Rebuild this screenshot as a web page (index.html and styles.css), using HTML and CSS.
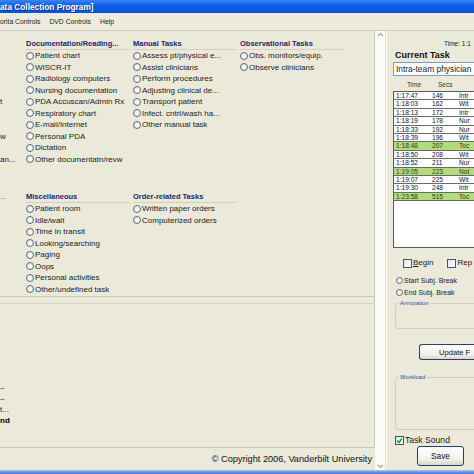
FILE: index.html
```html
<html lang="en">
<head>
    <title>Data Collection Program</title>
    <meta charset="UTF-8">
    <meta name="viewport" content="width=device-width, initial-scale=1.0">
    <link rel="stylesheet" href="styles.css">
</head>

<body>
<div class="window">
    <div class="titlebar">ata Collection Program]</div>
    <div class="menubar">
        <span class="menu-item">orita Controls</span>
        <span class="menu-item">DVD Controls</span>
        <span class="menu-item">Help</span>
    </div>

    <div class="main">
        <div class="leftcol">
            <div class="tasks">
                <!-- first block of task groups -->
                <div class="section">
                    <div class="group frag">
                        <div class="group-title"></div>
                        <div class="opt"></div>
                        <div class="opt"></div>
                        <div class="opt"></div>
                        <div class="opt"></div>
                        <div class="opt"><span class="lbl">t</span></div>
                        <div class="opt"></div>
                        <div class="opt"></div>
                        <div class="opt"><span class="lbl">w</span></div>
                        <div class="opt"></div>
                        <div class="opt"><span class="lbl">an...</span></div>
                    </div>
                    <div class="group">
                        <div class="group-title">Documentation/Reading...</div>
                        <div class="opt"><span class="radio"></span><span class="lbl">Patient chart</span></div>
                        <div class="opt"><span class="radio"></span><span class="lbl">WISCR-IT</span></div>
                        <div class="opt"><span class="radio"></span><span class="lbl">Radiology computers</span></div>
                        <div class="opt"><span class="radio"></span><span class="lbl">Nursing documentation</span></div>
                        <div class="opt"><span class="radio"></span><span class="lbl">PDA Accuscan/Admin Rx</span></div>
                        <div class="opt"><span class="radio"></span><span class="lbl">Respiratory chart</span></div>
                        <div class="opt"><span class="radio"></span><span class="lbl">E-mail/Internet</span></div>
                        <div class="opt"><span class="radio"></span><span class="lbl">Personal PDA</span></div>
                        <div class="opt"><span class="radio"></span><span class="lbl">Dictation</span></div>
                        <div class="opt"><span class="radio"></span><span class="lbl">Other documentatn/revw</span></div>
                    </div>
                    <div class="group">
                        <div class="group-title">Manual Tasks</div>
                        <div class="opt"><span class="radio"></span><span class="lbl">Assess pt/physical e...</span></div>
                        <div class="opt"><span class="radio"></span><span class="lbl">Assist clinicians</span></div>
                        <div class="opt"><span class="radio"></span><span class="lbl">Perform procedures</span></div>
                        <div class="opt"><span class="radio"></span><span class="lbl">Adjusting clinical de...</span></div>
                        <div class="opt"><span class="radio"></span><span class="lbl">Transport patient</span></div>
                        <div class="opt"><span class="radio"></span><span class="lbl">Infect. cntrl/wash ha...</span></div>
                        <div class="opt"><span class="radio"></span><span class="lbl">Other manual task</span></div>
                    </div>
                    <div class="group">
                        <div class="group-title">Observational Tasks</div>
                        <div class="opt"><span class="radio"></span><span class="lbl">Obs. monitors/equip.</span></div>
                        <div class="opt"><span class="radio"></span><span class="lbl">Observe clinicians</span></div>
                    </div>
                </div>

                <!-- second block -->
                <div class="section section-2">
                    <div class="group frag">
                        <div class="group-title">...</div>
                    </div>
                    <div class="group">
                        <div class="group-title">Miscellaneous</div>
                        <div class="opt"><span class="radio"></span><span class="lbl">Patient room</span></div>
                        <div class="opt"><span class="radio"></span><span class="lbl">Idle/wait</span></div>
                        <div class="opt"><span class="radio"></span><span class="lbl">Time in transit</span></div>
                        <div class="opt"><span class="radio"></span><span class="lbl">Looking/searching</span></div>
                        <div class="opt"><span class="radio"></span><span class="lbl">Paging</span></div>
                        <div class="opt"><span class="radio"></span><span class="lbl">Oops</span></div>
                        <div class="opt"><span class="radio"></span><span class="lbl">Personal activities</span></div>
                        <div class="opt"><span class="radio"></span><span class="lbl">Other/undefined task</span></div>
                    </div>
                    <div class="group">
                        <div class="group-title">Order-related Tasks</div>
                        <div class="opt"><span class="radio"></span><span class="lbl">Written paper orders</span></div>
                        <div class="opt"><span class="radio"></span><span class="lbl">Computerized orders</span></div>
                    </div>
                    <div class="group"></div>
                </div>

                <!-- third block, only the edge of the first column shows -->
                <div class="section section-3">
                    <div class="group frag">
                        <div class="opt tail"><span class="lbl">–</span></div>
                        <div class="opt tail"><span class="lbl">–</span></div>
                        <div class="opt tail"><span class="lbl">t...</span></div>
                        <div class="opt tail"><span class="lbl strong">nd</span></div>
                    </div>
                </div>
            </div>
            <div class="footer">© Copyright 2006, Vanderbilt University</div>
        </div>

        <div class="vscroll">
            <svg class="arrow" width="11" height="8" viewBox="0 0 11 8"><path d="M3 5 L5.5 2.5 L8 5" fill="none" stroke="#a0a0a0" stroke-width="1.1"/></svg>
            <svg class="arrow" width="11" height="8" viewBox="0 0 11 8"><path d="M3 3 L5.5 5.5 L8 3" fill="none" stroke="#a0a0a0" stroke-width="1.1"/></svg>
        </div>

        <div class="side">
            <div class="clock">Time: 1:1</div>
            <div class="current-title">Current Task</div>
            <div class="current-box">Intra-team physician</div>
            <div class="log-head"><span class="c-time">Time</span><span class="c-secs">Secs</span></div>
            <div class="log">
                <div class="log-row"><span class="c-time">1:17:47</span><span class="c-secs">146</span><span class="c-task">Intr</span></div>
                <div class="log-row"><span class="c-time">1:18:03</span><span class="c-secs">162</span><span class="c-task">Wit</span></div>
                <div class="log-row"><span class="c-time">1:18:13</span><span class="c-secs">172</span><span class="c-task">Intr</span></div>
                <div class="log-row"><span class="c-time">1:18:19</span><span class="c-secs">178</span><span class="c-task">Nur</span></div>
                <div class="log-row"><span class="c-time">1:18:33</span><span class="c-secs">192</span><span class="c-task">Nur</span></div>
                <div class="log-row"><span class="c-time">1:18:39</span><span class="c-secs">196</span><span class="c-task">Wit</span></div>
                <div class="log-row hl"><span class="c-time">1:18:48</span><span class="c-secs">207</span><span class="c-task">Toc</span></div>
                <div class="log-row"><span class="c-time">1:18:50</span><span class="c-secs">208</span><span class="c-task">Wit</span></div>
                <div class="log-row"><span class="c-time">1:18:52</span><span class="c-secs">211</span><span class="c-task">Nur</span></div>
                <div class="log-row hl"><span class="c-time">1:19:05</span><span class="c-secs">223</span><span class="c-task">Not</span></div>
                <div class="log-row"><span class="c-time">1:19:07</span><span class="c-secs">225</span><span class="c-task">Wit</span></div>
                <div class="log-row"><span class="c-time">1:19:30</span><span class="c-secs">248</span><span class="c-task">Intr</span></div>
                <div class="log-row hl"><span class="c-time">1:23:58</span><span class="c-secs">515</span><span class="c-task">Toc</span></div>
            </div>

            <div class="checks">
                <span class="check-item"><span class="checkbox"></span><span><u>B</u>egin</span></span>
                <span class="check-item"><span class="checkbox"></span><span>Rep</span></span>
            </div>
            <div class="subj">
                <div class="sopt"><span class="radio sm"></span><span>Start Subj. Break</span></div>
                <div class="sopt"><span class="radio sm"></span><span>End Subj. Break</span></div>
            </div>

            <fieldset class="gbox annotation"><legend>Annotation</legend></fieldset>
            <button class="xpbtn update"><span class="btn-text">Update F</span></button>
            <fieldset class="gbox workload"><legend>Workload</legend></fieldset>

            <div class="sound"><span class="checkbox checked">
                <svg width="7" height="7" viewBox="0 0 7 7"><path d="M1 3.5 L3 5.5 L6 1.5" fill="none" stroke="#21a121" stroke-width="1.5"/></svg>
            </span><span>Task Sound</span></div>
            <button class="xpbtn save">Save</button>
        </div>
    </div>
    <div class="frame-bottom"></div>
</div>
</body>
</html>
```

FILE: styles.css
```css
* {
    box-sizing: border-box;
}

body {
    margin: 0;
    width: 474px;
    height: 474px;
    overflow: hidden;
    background-color: #ebe9d9;
    font-family: "Liberation Sans", Arial, sans-serif;
    color: #1b1b1b;
}

.window {
    display: flex;
    flex-direction: column;
    height: 474px;
}

.titlebar {
    height: 13px;
    padding-top: 2px;
    background: linear-gradient(#3a86f4, #0c5ee6 45%, #0a54d6);
    color: #ffffff;
    font-size: 8.3px;
    font-weight: bold;
    line-height: 11px;
    white-space: nowrap;
    text-shadow: 1px 1px 0 #0b2f8f;
}

.menubar {
    display: flex;
    gap: 9px;
    height: 18px;
    font-size: 6.8px;
    line-height: 17px;
    border-bottom: 1px solid #cfccbb;
    background-color: #edebdd;
}

.main {
    display: flex;
    height: 439px;
}

/* ---------- left task area ---------- */
.leftcol {
    width: 375px;
    display: flex;
    flex-direction: column;
}

.tasks {
    flex: 1;
    overflow: hidden;
    padding-top: 7px;
    border-right: 1px solid #c9c6b5;
    border-bottom: 1px solid #c9c6b5;
}

.section {
    display: grid;
    grid-template-columns: 26px repeat(3, 107px);
}

.section-2 {
    margin-top: 26px;
    padding-bottom: 1px;
    border-bottom: 1px solid #cdcabb;
}

.section-3 {
    margin-top: 6px;
    padding-top: 78px;
    border-top: 1px solid #d9d6c8;
}

.group-title {
    width: 104px;
    height: 12px;
    font-size: 7.5px;
    font-weight: bold;
    line-height: 11px;
    color: #24246e;
    white-space: nowrap;
    border-bottom: 1px solid #d3d0c0;
}

.opt {
    display: flex;
    align-items: center;
    gap: 1px;
    height: 11.5px;
    font-size: 8px;
}

.opt.tail {
    height: 11px;
}

.lbl {
    white-space: nowrap;
    color: #222222;
}

/* the column cut off by the left window edge */
.frag .group-title {
    width: auto;
    border-bottom-color: transparent;
    color: #555555;
    font-weight: normal;
}

.frag .opt {
    color: #444444;
}

.radio {
    flex: none;
    width: 8px;
    height: 8px;
    border-radius: 50%;
    border: 1px solid #5d6a84;
    background: radial-gradient(circle at 60% 60%, #ffffff, #dedcd0);
}

.radio.sm {
    width: 7px;
    height: 7px;
}

.strong {
    font-weight: bold;
    color: #000000;
}

.footer {
    height: 22px;
    padding-right: 3px;
    text-align: right;
    font-size: 9.2px;
    line-height: 23px;
    color: #111111;
}

/* ---------- scrollbar strip ---------- */
.vscroll {
    width: 11px;
    display: flex;
    flex-direction: column;
    justify-content: space-between;
    background-color: #fafaf6;
    border-right: 1px solid #e2dfd1;
}

.arrow {
    display: block;
}

/* ---------- right side panel ---------- */
.side {
    width: 88px;
    overflow: hidden;
    padding-left: 6px;
    display: flex;
    flex-direction: column;
    align-items: flex-start;
    border-left: 1px solid #f6f5ef;
}

.clock {
    margin-top: 8px;
    height: 10px;
    padding-left: 51px;
    font-size: 6.5px;
    line-height: 10px;
    white-space: nowrap;
}

.current-title {
    height: 12px;
    padding-left: 2px;
    font-size: 9px;
    font-weight: bold;
    line-height: 12px;
    color: #111111;
    white-space: nowrap;
}

.current-box {
    margin-top: 1px;
    width: 100px;
    flex: none;
    height: 14px;
    padding-left: 2px;
    background-color: #ffffff;
    border: 1px solid #7f9db9;
    font-size: 8.4px;
    line-height: 12px;
    white-space: nowrap;
}

.log-head {
    margin-top: 4px;
    height: 10px;
    display: flex;
    padding-left: 3px;
    font-size: 6.5px;
    line-height: 10px;
    color: #333333;
    white-space: nowrap;
}

.log-head .c-time {
    text-align: center;
}

.log-head .c-secs {
    padding-left: 6px;
}

.c-time {
    width: 36px;
    flex: none;
}

.c-secs {
    width: 27px;
    flex: none;
}

.c-task {
    white-space: nowrap;
}

.log {
    margin-top: 1px;
    width: 100px;
    flex: none;
    height: 157px;
    background-color: #ffffff;
    border: 1px solid #5c5c5c;
    border-right: none;
}

.log-row {
    display: flex;
    height: 8.4px;
    padding-left: 2px;
    font-size: 6.6px;
    line-height: 8px;
    color: #101030;
    border-bottom: 1px solid #6a6a6a;
    white-space: nowrap;
}

.log-row.hl {
    background-color: #b2dc7c;
    color: #1f3d10;
}

.checks {
    margin-top: 9px;
    height: 12px;
    display: flex;
    gap: 14px;
    padding-left: 10px;
    font-size: 8px;
    line-height: 12px;
    white-space: nowrap;
}

.check-item {
    display: flex;
    align-items: center;
    gap: 1px;
}

.checkbox {
    flex: none;
    width: 9px;
    height: 9px;
    border: 1px solid #3a5580;
    background: linear-gradient(135deg, #e4e3dc, #ffffff);
    display: flex;
    align-items: center;
    justify-content: center;
}

.subj {
    margin-top: 6px;
    padding-left: 3px;
}

.sopt {
    display: flex;
    align-items: center;
    gap: 1px;
    height: 11.5px;
    font-size: 7px;
    white-space: nowrap;
}

.gbox {
    margin: 0 0 0 2px;
    padding: 0;
    width: 100px;
    flex: none;
    border: 1px solid #d0cebf;
    border-radius: 3px;
}

.gbox legend {
    margin-left: 3px;
    padding: 0 1px;
    font-size: 6px;
    line-height: 10px;
    color: #2d4fa6;
}

.annotation {
    height: 31px;
}

.workload {
    margin-top: 12px;
    height: 58px;
}

.xpbtn {
    flex: none;
    padding: 0;
    border: 1px solid #2a3f6e;
    border-radius: 3px;
    background: linear-gradient(#ffffff, #f1f0ea 70%, #d8d5c8);
    font-family: "Liberation Sans", Arial, sans-serif;
    color: #111111;
}

.update {
    margin-top: 15px;
    margin-left: 26px;
    width: 60px;
    height: 16px;
    padding-left: 19px;
    text-align: left;
    font-size: 7.6px;
    white-space: nowrap;
    border-right: none;
    border-radius: 3px 0 0 3px;
}

.sound {
    margin-top: 4px;
    height: 12px;
    display: flex;
    align-items: center;
    gap: 1px;
    padding-left: 2px;
    font-size: 8.6px;
    white-space: nowrap;
}

.save {
    margin-left: 24px;
    width: 47px;
    height: 20px;
    font-size: 8.3px;
}

.frame-bottom {
    height: 4px;
    background: linear-gradient(#a6c2ee, #3b6fd8);
}
```
